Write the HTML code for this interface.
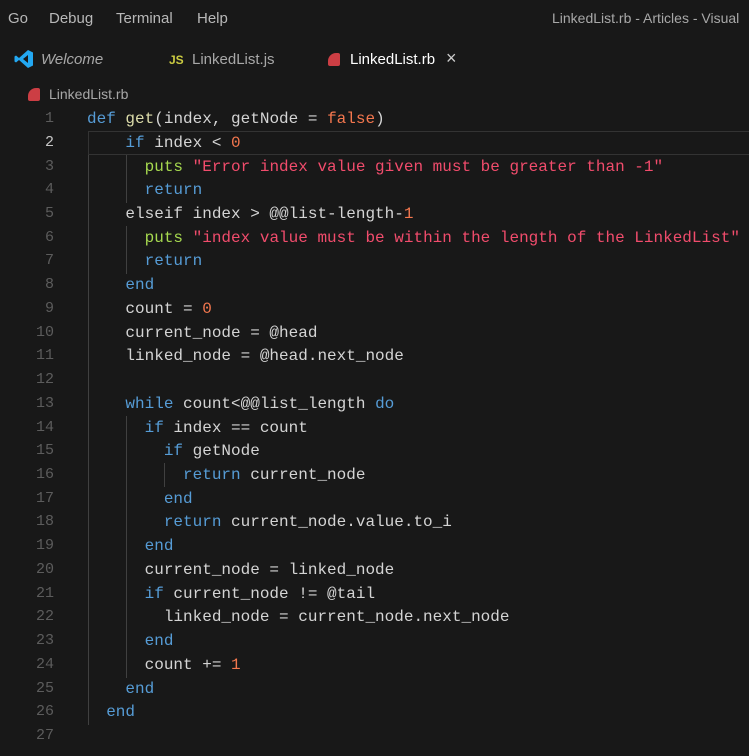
<!DOCTYPE html>
<html><head><meta charset="utf-8"><style>
body{margin:0;width:749px;height:756px;background:#181818;overflow:hidden;position:relative;font-family:"Liberation Sans",sans-serif}
.m{position:absolute;top:10px;font-size:15px;color:#b8b8b8;white-space:nowrap}
.t{position:absolute;font-size:15px;color:#a8a8a8;white-space:nowrap}
.ln{position:absolute;left:0;width:54px;text-align:right;font:15px "Liberation Mono",monospace;color:#5c5c5c;height:24px;line-height:24px}
.c{position:absolute;left:87px;font:16px "Liberation Mono",monospace;color:#d4d4d4;white-space:pre;height:24px;line-height:24px}
.k{color:#569cd6}.f{color:#dcdcaa}.n{color:#f4774e}.s{color:#f14c6c}.p{color:#a6d94f}
.g{position:absolute;width:1px;background:#404040}
</style></head><body>
<div class="m" style="left:8px">Go</div><div class="m" style="left:49px">Debug</div><div class="m" style="left:116px">Terminal</div><div class="m" style="left:197px">Help</div>
<div class="m" style="left:552px;font-size:14px;top:10px;color:#a8a8a8">LinkedList.rb - Articles - Visual</div>
<svg style="position:absolute;left:14px;top:49px" width="20" height="20" viewBox="0 0 20 20"><path d="M14 1 L19 3.5 V16.5 L14 19 L5 11 L2 13.5 L0.5 12.5 V7.5 L2 6.5 L5 9 Z M14 6 L9 10 L14 14 Z" fill="#23a8f2" fill-rule="evenodd"/></svg>
<div class="t" style="left:41px;top:51px;font-style:italic">Welcome</div>
<div style="position:absolute;left:169px;top:53px;font:bold 12px 'Liberation Sans';color:#cbcb41">JS</div>
<div class="t" style="left:192px;top:51px">LinkedList.js</div>
<div style="position:absolute;left:328px;top:53px;width:12px;height:13px;background:#cc3e44;border-radius:8px 2px 2px 2px"></div>
<div class="t" style="left:350px;top:51px;color:#fff">LinkedList.rb</div>
<div class="t" style="left:446px;top:48px;font-size:18px;color:#ccc">×</div>
<div style="position:absolute;left:28px;top:88px;width:12px;height:13px;background:#cc3e44;border-radius:8px 2px 2px 2px"></div>
<div class="t" style="left:49px;top:86px;font-size:14px">LinkedList.rb</div>
<div style="position:absolute;left:88px;top:131px;width:661px;height:22px;border:1px solid #333;border-right:none"></div>
<div class="g" style="left:88px;top:155px;height:570px"></div>
<div class="g" style="left:126px;top:155px;height:48px"></div>
<div class="g" style="left:126px;top:226px;height:48px"></div>
<div class="g" style="left:126px;top:416px;height:262px"></div>
<div class="g" style="left:164px;top:463px;height:24px"></div>
<div class="ln" style="top:107px">1</div><div class="c" style="top:107px"><span class="k">def</span> <span class="f">get</span>(index, getNode = <span class="n">false</span>)</div>
<div class="ln" style="top:130.7px;color:#c6c6c6">2</div><div class="c" style="top:130.7px">    <span class="k">if</span> index &lt; <span class="n">0</span></div>
<div class="ln" style="top:154.5px">3</div><div class="c" style="top:154.5px">      <span class="p">puts</span> <span class="s">"Error index value given must be greater than -1"</span></div>
<div class="ln" style="top:178.2px">4</div><div class="c" style="top:178.2px">      <span class="k">return</span></div>
<div class="ln" style="top:201.9px">5</div><div class="c" style="top:201.9px">    elseif index &gt; @@list-length-<span class="n">1</span></div>
<div class="ln" style="top:225.7px">6</div><div class="c" style="top:225.7px">      <span class="p">puts</span> <span class="s">"index value must be within the length of the LinkedList"</span></div>
<div class="ln" style="top:249.4px">7</div><div class="c" style="top:249.4px">      <span class="k">return</span></div>
<div class="ln" style="top:273.1px">8</div><div class="c" style="top:273.1px">    <span class="k">end</span></div>
<div class="ln" style="top:296.8px">9</div><div class="c" style="top:296.8px">    count = <span class="n">0</span></div>
<div class="ln" style="top:320.6px">10</div><div class="c" style="top:320.6px">    current_node = @head</div>
<div class="ln" style="top:344.3px">11</div><div class="c" style="top:344.3px">    linked_node = @head.next_node</div>
<div class="ln" style="top:368px">12</div>
<div class="ln" style="top:391.8px">13</div><div class="c" style="top:391.8px">    <span class="k">while</span> count&lt;@@list_length <span class="k">do</span></div>
<div class="ln" style="top:415.5px">14</div><div class="c" style="top:415.5px">      <span class="k">if</span> index == count</div>
<div class="ln" style="top:439.2px">15</div><div class="c" style="top:439.2px">        <span class="k">if</span> getNode</div>
<div class="ln" style="top:463px">16</div><div class="c" style="top:463px">          <span class="k">return</span> current_node</div>
<div class="ln" style="top:486.7px">17</div><div class="c" style="top:486.7px">        <span class="k">end</span></div>
<div class="ln" style="top:510.4px">18</div><div class="c" style="top:510.4px">        <span class="k">return</span> current_node.value.to_i</div>
<div class="ln" style="top:534.1px">19</div><div class="c" style="top:534.1px">      <span class="k">end</span></div>
<div class="ln" style="top:557.9px">20</div><div class="c" style="top:557.9px">      current_node = linked_node</div>
<div class="ln" style="top:581.6px">21</div><div class="c" style="top:581.6px">      <span class="k">if</span> current_node != @tail</div>
<div class="ln" style="top:605.3px">22</div><div class="c" style="top:605.3px">        linked_node = current_node.next_node</div>
<div class="ln" style="top:629.1px">23</div><div class="c" style="top:629.1px">      <span class="k">end</span></div>
<div class="ln" style="top:652.8px">24</div><div class="c" style="top:652.8px">      count += <span class="n">1</span></div>
<div class="ln" style="top:676.5px">25</div><div class="c" style="top:676.5px">    <span class="k">end</span></div>
<div class="ln" style="top:700.3px">26</div><div class="c" style="top:700.3px">  <span class="k">end</span></div>
<div class="ln" style="top:724px">27</div>
</body></html>
